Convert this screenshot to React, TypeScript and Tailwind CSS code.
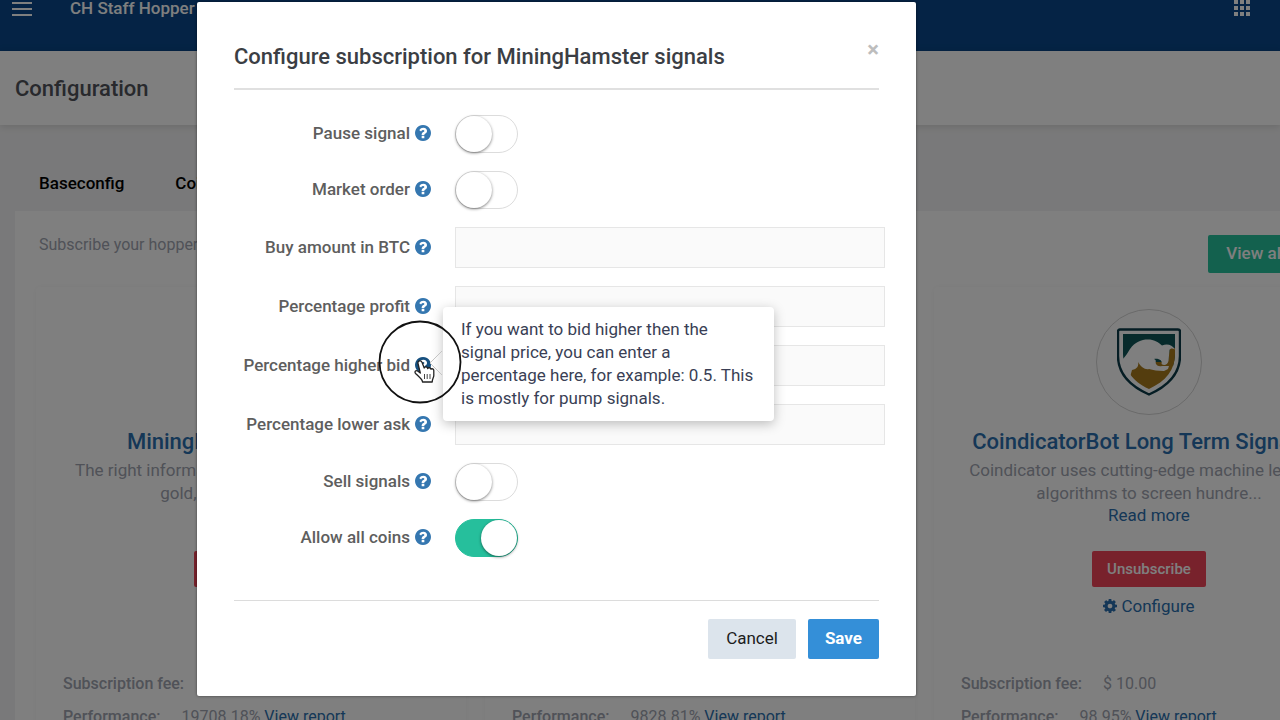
import { useState } from 'react'
import type { ReactNode } from 'react'

function QuestionIcon({ className }: { className?: string }) {
  return (
    <svg viewBox="128 128 1536 1536" fill="currentColor" aria-hidden="true" className={className}>
      <path d="M1024 1376v-192q0-14-9-23t-23-9h-192q-14 0-23 9t-9 23v192q0 14 9 23t23 9h192q14 0 23-9t9-23zm256-672q0-88-55.5-163t-138.5-116-170-41q-243 0-371 213-15 24 8 42l132 100q7 6 19 6 16 0 25-12 53-68 86-92 34-24 86-24 48 0 85.5 26t37.5 59q0 38-20 61t-68 45q-63 28-115.5 86.5t-52.5 125.5v36q0 14 9 23t23 9h192q14 0 23-9t9-23q0-19 21.5-49.5t54.5-49.5q32-18 49-28.5t46-35 44.5-48 28-60.5 12.5-81zm384 192q0 209-103 385.5t-279.5 279.5-385.5 103-385.5-103-279.5-279.5-103-385.5 103-385.5 279.5-279.5 385.5-103 385.5 103 279.5 279.5 103 385.5z" />
    </svg>
  )
}

function CogIcon({ className }: { className?: string }) {
  return (
    <svg viewBox="128 128 1536 1536" fill="currentColor" aria-hidden="true" className={className}>
      <path d="M1152 896q0-106-75-181t-181-75-181 75-75 181 75 181 181 75 181-75 75-181zm512-109v222q0 12-8 23t-20 13l-185 28q-19 54-39 91 35 50 107 138 10 12 10 25t-9 23q-27 37-99 108t-94 71q-12 0-26-9l-138-108q-44 23-91 38-16 136-29 186-7 28-36 28h-222q-14 0-24.5-8.5t-11.5-21.5l-28-184q-49-16-90-37l-141 107q-10 9-25 9-14 0-25-11-126-114-165-168-7-10-7-23 0-12 8-23 15-21 51-66.5t54-70.5q-27-50-41-99l-183-27q-13-2-21-12.5t-8-23.5v-222q0-12 8-23t19-13l186-28q14-46 39-92-40-57-107-138-10-12-10-24 0-10 9-23 26-36 98.5-107.5t94.5-71.5q13 0 26 10l138 107q44-23 91-38 16-136 29-186 7-28 36-28h222q14 0 24.5 8.5t11.5 21.5l28 184q49 16 90 37l142-107q9-9 24-9 13 0 25 10 129 119 165 170 7 8 7 22 0 12-8 23-15 21-51 66.5t-54 70.5q26 50 41 98l183 28q13 2 21 12.5t8 23.5z" />
    </svg>
  )
}

function BullShield() {
  return (
    <svg viewBox="0 0 64 68" className="w-16" aria-hidden="true">
      <path d="M3 1.500h58q2 0 2 2V28c0 18-12 30-31 38.500C13 58 1 46 1 28V3.500q0-2 2-2Z" fill="#fff" stroke="#0b3a48" strokeWidth="2.400" strokeLinejoin="round" />
      <path d="M6 6h52v20c0 4-1 8-2 12H8c-1-4-2-8-2-12Z" fill="#0f5456" />
      <path d="M53 20h5v6c0 16-9 27-26 35-9-4-15-9-19-15V34h38Z" fill="#a97b1c" />
      <path
        d="M5 32C9 28 11 24 13 21 18 14 24 11.500 31 11.500c6 0 10 2.500 14 6 5-2 10-1 13 4-3-1.500-4.500-1-5.500.5L51.500 33c-1 4-4.500 5-7 3 1.500-3-2.500-6-7.500-5 3 1 1 3 2 5 1.500 2 3 2.500 6 2h7l-1 3-4 2c-6 0-11-1-15-2-4 1-8-2-11-7 1 4-1 7-6 8l-2 7C8 43 6 38 5 32Z"
        fill="#fff"
      />
    </svg>
  )
}

const signals = [
  {
    name: 'MiningHamster Signals 1',
    lines: ['The right information at the right moment is as', 'gold, we provide it to all.'],
    fee: '$ 0.00',
    performance: '19708.18%',
  },
  {
    name: 'Crypto Signals',
    lines: ['Signals for all exchanges', 'and all coins.'],
    fee: '$ 0.00',
    performance: '9828.81%',
  },
  {
    name: 'CoindicatorBot Long Term Signals 1',
    lines: ['Coindicator uses cutting-edge machine learning', 'algorithms to screen hundre...'],
    fee: '$ 10.00',
    performance: '98.95%',
  },
]

function SignalCard({ signal }: { signal: (typeof signals)[number] }) {
  return (
    <article className="flex flex-col items-center rounded bg-white pt-[22px] text-[#a0a4b0] shadow-[0_0_6px_rgba(0,0,0,0.04)]">
      <div className="flex size-[106px] items-center justify-center rounded-full border border-[#d4d4d4]">
        <BullShield />
      </div>
      <h3 className="mt-[13px] text-[22px] leading-7 font-medium whitespace-nowrap text-[#2a6fae]">{signal.name}</h3>
      <p className="mt-[3px] text-center leading-[23px] whitespace-nowrap">
        {signal.lines[0]}
        <br />
        {signal.lines[1]}
      </p>
      <a href="#" className="leading-[21px] text-[#2a6fae]">
        Read more
      </a>
      <button className="mt-[25px] h-9 rounded-xs bg-[#f04458] px-[15px] text-[15px] leading-5 font-medium text-white">Unsubscribe</button>
      <a href="#" className="mt-[7px] flex items-center gap-1 leading-6 text-[#2a6fae]">
        <CogIcon className="size-[14px]" />
        Configure
      </a>
      <div className="mt-[54px] w-full space-y-[9px] pl-[27px] text-base">
        <p className="flex gap-[21px]">
          <span className="font-medium">Subscription fee:</span>
          <span>{signal.fee}</span>
        </p>
        <p className="flex gap-[21px]">
          <span className="font-medium">Performance:</span>
          <span>
            {signal.performance}{' '}
            <a href="#" className="text-[#2a6fae]">
              View report
            </a>
          </span>
        </p>
      </div>
    </article>
  )
}

function Row({ id, label, help, children }: { id: string; label: string; help?: ReactNode; children: ReactNode }) {
  return (
    <div className="grid grid-cols-[197px_1fr] items-center gap-6">
      <div className="flex items-center justify-end gap-[5px]">
        <label htmlFor={id} className="font-medium whitespace-nowrap text-[#5e5e5e]">
          {label}
        </label>
        <span className="relative pb-[2px]">
          <button type="button" aria-label={`Help: ${label}`} className={help ? 'block text-[#17507f]' : 'block text-[#3577b0]'}>
            <QuestionIcon className="size-4" />
          </button>
          {help}
        </span>
      </div>
      {children}
    </div>
  )
}

function Toggle({ id, initial = false }: { id: string; initial?: boolean }) {
  const [on, setOn] = useState(initial)
  return (
    <span className="relative h-[38px] w-[63px]">
      <input
        id={id}
        type="checkbox"
        checked={on}
        onChange={() => setOn(!on)}
        className="peer block size-full cursor-pointer appearance-none rounded-full border border-[#dcdcdc] bg-white checked:border-[#26bf9c] checked:bg-[#26bf9c]"
      />
      <span className="pointer-events-none absolute top-px left-px size-9 rounded-full bg-white shadow-[0_1px_3px_rgba(0,0,0,0.5)] peer-checked:right-px peer-checked:left-auto" />
    </span>
  )
}

function TextField({ id }: { id: string }) {
  return <input id={id} type="text" className="-mr-[6px] h-[41px] border border-[#e6e6e6] bg-[#fafafa] px-3 outline-none" />
}

function HelpTip() {
  return (
    <>
      <span
        role="tooltip"
        className="absolute -top-[50px] left-7 z-10 w-[331px] rounded-sm bg-white px-[18px] py-[11px] leading-[23px] text-[#3a3f55] shadow-[0_3px_12px_rgba(0,0,0,0.25)]"
      >
        If you want to bid higher then the signal price, you can enter a percentage here, for example: 0.5. This is mostly for pump
        signals.
      </span>
      <svg viewBox="0 0 84 84" className="pointer-events-none absolute -top-[37px] -left-[37px] z-20 size-[84px] max-w-none" fill="none" aria-hidden="true">
        <path d="M64 31 52 43l12 12" stroke="#c4c4c4" />
        <circle cx="42" cy="42" r="40.500" stroke="#111" strokeWidth="1.800" />
        <path
          d="M40 43.500c-.5-3 3.200-3.500 4.200-.8l2 5.300c.5-1.500 3-1.500 3.500.5.700-1.200 2.800-1 3.200.7 1-.9 2.800-.4 2.900 1.300v5c0 2-1.600 3.500-1.600 6.500H44.500c0-3-3.500-5-7-8.500-1.500-2 .5-3.800 2.500-2.300l2.300 1.800Z"
          fill="#fff"
          stroke="#222"
          strokeWidth="1.300"
          strokeLinejoin="round"
        />
        <path d="M46.500 54v5M49.200 54v5M52 54v5" stroke="#444" />
      </svg>
    </>
  )
}

function ConfigureDialog() {
  return (
    <div className="absolute inset-0 bg-black/50 pt-[2px] pl-[197px]">
      <form role="dialog" aria-labelledby="dialog-title" className="w-[719px] rounded-xs bg-white px-[37px] pb-[37px] shadow-[0_0_3px_rgba(0,0,0,0.5)]">
        <header className="flex justify-between border-b-2 border-[#e0e0e0] pt-[41px] pb-[17px]">
          <h2 id="dialog-title" className="text-[22px] leading-7 font-medium text-[#3b3e44]">
            Configure subscription for MiningHamster signals
          </h2>
          <button type="button" aria-label="Close" className="-mt-[3px] h-5 text-[22px] leading-5 font-bold text-[#bdbdbd]">
            ×
          </button>
        </header>
        <div className="flex flex-col gap-[18px] pt-[25px] pb-[43px]">
          <Row id="pause" label="Pause signal">
            <Toggle id="pause" />
          </Row>
          <Row id="market" label="Market order">
            <Toggle id="market" />
          </Row>
          <Row id="amount" label="Buy amount in BTC">
            <TextField id="amount" />
          </Row>
          <Row id="profit" label="Percentage profit">
            <TextField id="profit" />
          </Row>
          <Row id="bid" label="Percentage higher bid" help={<HelpTip />}>
            <TextField id="bid" />
          </Row>
          <Row id="ask" label="Percentage lower ask">
            <TextField id="ask" />
          </Row>
          <Row id="sell" label="Sell signals">
            <Toggle id="sell" />
          </Row>
          <Row id="coins" label="Allow all coins">
            <Toggle id="coins" initial />
          </Row>
        </div>
        <footer className="flex justify-end gap-3 border-t border-[#dcdcdc] pt-[18px]">
          <button type="button" className="h-10 rounded-xs bg-[#dce4ec] px-[18px] text-[17px] text-[#1c1c1c]">
            Cancel
          </button>
          <button type="button" className="h-10 rounded-xs bg-[#348fd8] px-[17px] text-[17px] font-bold text-white">
            Save
          </button>
        </footer>
      </form>
    </div>
  )
}

export default function App() {
  return (
    <div className="relative h-screen overflow-hidden bg-[#f3f3f4] font-['Roboto',sans-serif] text-[17px]">
      <header className="flex h-[51px] items-start bg-[#0a478a] pl-3 text-white">
        <button aria-label="Menu" className="flex w-5 flex-col gap-1 pt-[2px]">
          <span className="h-[2px] w-full bg-white" />
          <span className="h-[2px] w-full bg-white" />
          <span className="h-[2px] w-full bg-white" />
        </button>
        <nav className="ml-[38px] flex gap-[52px] leading-4 font-medium">
          <a href="#">CH Staff Hopper</a>
          <a href="#">Subscription Affiliate Hopper</a>
        </nav>
        <button aria-label="Apps" className="mr-[30px] ml-auto grid grid-cols-3 gap-[2px]">
          {Array.from({ length: 9 }, (_, i) => (
            <span key={i} className="size-1 bg-white" />
          ))}
        </button>
      </header>

      <div className="bg-white px-[15px] pt-6 pb-[22px] shadow-[0_1px_8px_rgba(0,0,0,0.15)]">
        <h1 className="text-[22px] leading-7 font-medium text-[#50535a]">Configuration</h1>
      </div>

      <nav className="flex gap-[51px] px-[39px] pt-[46px] pb-[15px] leading-[25px] font-medium text-black">
        <a href="#">Baseconfig</a>
        <a href="#">Coins and amounts</a>
      </nav>

      <main className="ml-[15px] min-w-[1370px] bg-white px-[21px] pt-6 pb-8">
        <div className="flex items-start justify-between pr-[2px]">
          <p className="pl-[3px] text-base leading-5 text-[#a0a4b0]">Subscribe your hopper to external signals.</p>
          <button className="h-[38px] rounded-xs bg-[#26c29c] px-[18px] font-medium text-white">View all signals</button>
        </div>
        <div className="mt-[14px] grid grid-cols-[repeat(3,430px)] gap-[19px]">
          {signals.map((signal) => (
            <SignalCard key={signal.name} signal={signal} />
          ))}
        </div>
      </main>

      <ConfigureDialog />
    </div>
  )
}
